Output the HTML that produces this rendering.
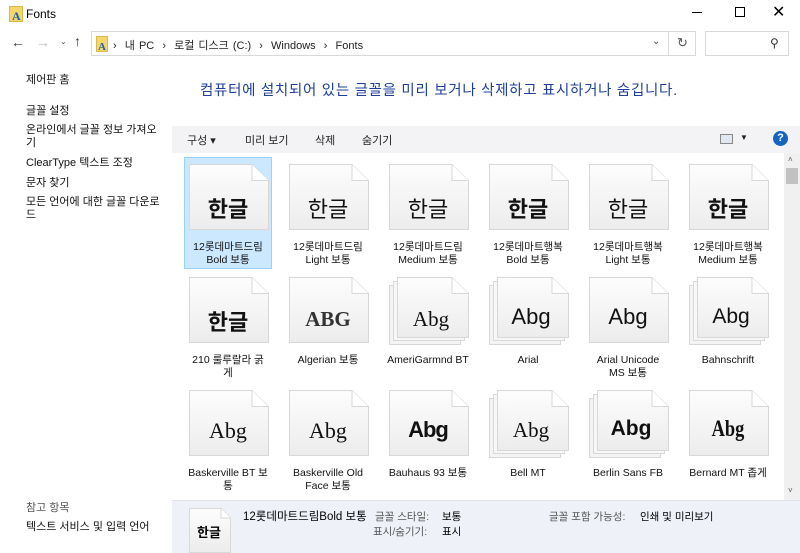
<!DOCTYPE html>
<html><head><meta charset="utf-8"><style>
*{margin:0;padding:0;box-sizing:border-box}
body{width:800px;height:553px;overflow:hidden;background:#fff;font-family:"Liberation Sans","Noto Sans CJK KR",sans-serif;font-size:11px;color:#000;position:relative}
.a{position:absolute}
.t{position:absolute;width:88px;height:112px;text-align:center}
.lab{position:absolute;left:0;width:88px;top:84px;font-size:10.5px;line-height:13px;color:#111}
.ic{position:absolute;left:4px;top:6px;width:82px;height:70px}
.smp{position:absolute;left:0;width:100%;text-align:center;color:#111}
.left div{position:absolute;left:26px;font-size:11px;color:#111;line-height:13px}
</style></head><body>
<svg width="0" height="0" style="position:absolute"><defs>
<linearGradient id="g" x1="0" y1="0" x2="0" y2="1"><stop offset="0" stop-color="#fdfdfd"/><stop offset="1" stop-color="#ececec"/></linearGradient>
<symbol id="pg" viewBox="0 0 82 70"><path d="M1.5 1.5H64L80.5 17.5V66.5H1.5Z" fill="url(#g)" stroke="#d8d8d8"/><path d="M64 1.5V17.5H80.5" fill="#fff" stroke="#d8d8d8"/></symbol>
<symbol id="st" viewBox="0 0 82 70"><path d="M1.5 9.5H56L72.5 24V68.5H1.5Z" fill="#f4f4f4" stroke="#d8d8d8"/><path d="M5.5 5.5H60L76.5 20V64.5H5.5Z" fill="#f7f7f7" stroke="#d8d8d8"/><path d="M9.5 1.5H64L80.5 17.5V61.5H9.5Z" fill="url(#g)" stroke="#d8d8d8"/><path d="M64 1.5V17.5H80.5" fill="#fff" stroke="#d8d8d8"/></symbol>
</defs></svg>

<svg class="a" style="left:9px;top:6px" width="14" height="16"><rect x="0.5" y="0.5" width="13" height="15" fill="#f5d66b" stroke="#d9b94a"/><text x="3" y="14" font-family="Liberation Serif" font-size="12" font-weight="bold" fill="#1f5fb0">A</text></svg>
<div class="a" style="left:26px;top:7px;font-size:12px">Fonts</div>
<div class="a" style="left:692px;top:12px;width:10px;height:1px;background:#000"></div>
<div class="a" style="left:735px;top:7px;width:10px;height:10px;border:1px solid #000"></div>
<div class="a" style="left:772px;top:2px;font-size:16px">✕</div>

<div class="a" style="left:11px;top:34px;font-size:14px;color:#333">←</div>
<div class="a" style="left:36px;top:34px;font-size:14px;color:#bbb">→</div>
<div class="a" style="left:60px;top:37px;font-size:8px;color:#555">⌄</div>
<div class="a" style="left:74px;top:33px;font-size:14px;color:#333">↑</div>
<div class="a" style="left:91px;top:31px;width:605px;height:25px;border:1px solid #d9d9d9"></div>
<div class="a" style="left:668px;top:31px;width:1px;height:25px;background:#d9d9d9"></div>
<svg class="a" style="left:96px;top:36px" width="12" height="16"><rect x="0.5" y="0.5" width="11" height="15" fill="#f5d66b" stroke="#d9b94a"/><text x="2" y="14" font-family="Liberation Serif" font-size="11" font-weight="bold" fill="#1f5fb0">A</text></svg>
<div class="a" style="left:113px;top:37px;font-size:11px;color:#222;word-spacing:1px">›&nbsp; 내 PC &nbsp;›&nbsp; 로컬 디스크 (C:) &nbsp;›&nbsp; Windows &nbsp;›&nbsp; Fonts</div>
<div class="a" style="left:652px;top:36px;font-size:10px;color:#444">⌄</div>
<div class="a" style="left:677px;top:35px;font-size:13px;color:#555">↻</div>
<div class="a" style="left:705px;top:31px;width:84px;height:25px;border:1px solid #d9d9d9"></div>
<div class="a" style="left:770px;top:36px;font-size:12px;color:#333">⚲</div>

<div class="left">
<div style="top:74px">제어판 홈</div>
<div style="top:105px">글꼴 설정</div>
<div style="top:124px;width:140px">온라인에서 글꼴 정보 가져오<br>기</div>
<div style="top:157px">ClearType 텍스트 조정</div>
<div style="top:177px">문자 찾기</div>
<div style="top:196px;width:142px">모든 언어에 대한 글꼴 다운로<br>드</div>
<div style="top:502px;color:#555">참고 항목</div>
<div style="top:521px">텍스트 서비스 및 입력 언어</div>
</div>

<div class="a" style="left:200px;top:79px;font-size:14.5px;color:#1e3f9a;letter-spacing:0.7px">컴퓨터에 설치되어 있는 글꼴을 미리 보거나 삭제하고 표시하거나 숨깁니다.</div>

<div class="a" style="left:172px;top:126px;width:628px;height:27px;background:#f3f3f6"></div>
<div class="a" style="left:187px;top:132px;font-size:11px;color:#222">구성 ▾</div>
<div class="a" style="left:245px;top:132px;font-size:11px;color:#222">미리 보기</div>
<div class="a" style="left:315px;top:132px;font-size:11px;color:#222">삭제</div>
<div class="a" style="left:362px;top:132px;font-size:11px;color:#222">숨기기</div>
<div class="a" style="left:720px;top:134px;width:13px;height:10px;border:1px solid #888;background:#dfe8f0"></div>
<div class="a" style="left:740px;top:133px;font-size:8px;color:#222">▼</div>
<div class="a" style="left:773px;top:131px;width:15px;height:15px;border-radius:50%;background:#1565c0;color:#fff;font-weight:bold;font-size:11px;text-align:center;line-height:15px">?</div>

<div class="a" style="left:784px;top:153px;width:16px;height:347px;background:#f0f0f0"></div>
<div class="a" style="left:786px;top:168px;width:12px;height:16px;background:#c2c2c2"></div>
<div class="a" style="left:788px;top:155px;font-size:8px;color:#555">˄</div>
<div class="a" style="left:788px;top:486px;font-size:8px;color:#555">˅</div>

<div class="t" style="left:184px;top:157px;background:#cce8ff;border:1px solid #99d1ff"><svg class="ic" style="left:3px;top:5px"><use href="#pg"/></svg><div class="smp" style="top:34px;font-size:22px;font-weight:bold">한글</div><div class="lab" style="left:-1px;top:83px">12롯데마트드림<br>Bold 보통</div></div>
<div class="t" style="left:284px;top:157px"><svg class="ic"><use href="#pg"/></svg><div class="smp" style="top:35px;font-size:22px">한글</div><div class="lab">12롯데마트드림<br>Light 보통</div></div>
<div class="t" style="left:384px;top:157px"><svg class="ic"><use href="#pg"/></svg><div class="smp" style="top:35px;font-size:22px">한글</div><div class="lab">12롯데마트드림<br>Medium 보통</div></div>
<div class="t" style="left:484px;top:157px"><svg class="ic"><use href="#pg"/></svg><div class="smp" style="top:35px;font-size:22px;font-weight:bold">한글</div><div class="lab">12롯데마트행복<br>Bold 보통</div></div>
<div class="t" style="left:584px;top:157px"><svg class="ic"><use href="#pg"/></svg><div class="smp" style="top:35px;font-size:22px">한글</div><div class="lab">12롯데마트행복<br>Light 보통</div></div>
<div class="t" style="left:684px;top:157px"><svg class="ic"><use href="#pg"/></svg><div class="smp" style="top:35px;font-size:22px;font-weight:bold">한글</div><div class="lab">12롯데마트행복<br>Medium 보통</div></div>

<div class="t" style="left:184px;top:270px"><svg class="ic"><use href="#pg"/></svg><div class="smp" style="top:35px;font-size:22px;font-weight:bold">한글</div><div class="lab">210 룰루랄라 굵<br>게</div></div>
<div class="t" style="left:284px;top:270px"><svg class="ic"><use href="#pg"/></svg><div class="smp" style="top:37px;font-size:21px;font-family:'Liberation Serif',serif;font-weight:bold;color:#333">ABG</div><div class="lab">Algerian 보통</div></div>
<div class="t" style="left:384px;top:270px"><svg class="ic"><use href="#st"/></svg><div class="smp" style="top:37px;font-size:21px;font-family:'Liberation Serif',serif;padding-left:6px">Abg</div><div class="lab">AmeriGarmnd BT</div></div>
<div class="t" style="left:484px;top:270px"><svg class="ic"><use href="#st"/></svg><div class="smp" style="top:34px;font-size:22px;padding-left:6px">Abg</div><div class="lab">Arial</div></div>
<div class="t" style="left:584px;top:270px"><svg class="ic"><use href="#pg"/></svg><div class="smp" style="top:34px;font-size:22px">Abg</div><div class="lab">Arial Unicode<br>MS 보통</div></div>
<div class="t" style="left:684px;top:270px"><svg class="ic"><use href="#st"/></svg><div class="smp" style="top:35px;font-size:21px;padding-left:6px">Abg</div><div class="lab">Bahnschrift</div></div>

<div class="t" style="left:184px;top:383px"><svg class="ic"><use href="#pg"/></svg><div class="smp" style="top:35px;font-size:22px;font-family:'Liberation Serif',serif">Abg</div><div class="lab">Baskerville BT 보<br>통</div></div>
<div class="t" style="left:284px;top:383px"><svg class="ic"><use href="#pg"/></svg><div class="smp" style="top:35px;font-size:22px;font-family:'Liberation Serif',serif">Abg</div><div class="lab">Baskerville Old<br>Face 보통</div></div>
<div class="t" style="left:384px;top:383px"><svg class="ic"><use href="#pg"/></svg><div class="smp" style="top:34px;font-size:22px;font-weight:bold;letter-spacing:-1px">Abg</div><div class="lab">Bauhaus 93 보통</div></div>
<div class="t" style="left:484px;top:383px"><svg class="ic"><use href="#st"/></svg><div class="smp" style="top:35px;font-size:21px;font-family:'Liberation Serif',serif;padding-left:6px">Abg</div><div class="lab">Bell MT</div></div>
<div class="t" style="left:584px;top:383px"><svg class="ic"><use href="#st"/></svg><div class="smp" style="top:34px;font-size:21px;font-weight:bold;padding-left:6px">Abg</div><div class="lab">Berlin Sans FB</div></div>
<div class="t" style="left:684px;top:383px"><svg class="ic"><use href="#pg"/></svg><div class="smp" style="top:33px;font-size:23px;font-weight:bold;font-family:'Liberation Serif',serif;transform:scaleX(0.8)">Abg</div><div class="lab">Bernard MT 좁게</div></div>

<div class="a" style="left:172px;top:500px;width:628px;height:53px;background:#eef2f8;border-top:1px solid #dde3ec"></div>
<svg class="a" style="left:188px;top:507px" width="44" height="46"><path d="M1.5 1.5H33L42.5 11V45.5H1.5Z" fill="url(#g)" stroke="#d8d8d8"/><path d="M33 1.5V11H42.5" fill="#fff" stroke="#d8d8d8"/></svg>
<div class="a" style="left:197px;top:522px;font-size:13px;font-weight:bold">한글</div>
<div class="a" style="left:243px;top:508px;font-size:11.5px">12롯데마트드림Bold 보통</div>
<div class="a" style="left:375px;top:509px;font-size:10.5px;color:#555">글꼴 스타일:</div>
<div class="a" style="left:442px;top:509px;font-size:10.5px">보통</div>
<div class="a" style="left:373px;top:524px;font-size:10.5px;color:#555">표시/숨기기:</div>
<div class="a" style="left:442px;top:524px;font-size:10.5px">표시</div>
<div class="a" style="left:549px;top:509px;font-size:10.5px;color:#555">글꼴 포함 가능성:</div>
<div class="a" style="left:640px;top:509px;font-size:10.5px">인쇄 및 미리보기</div>
</body></html>
